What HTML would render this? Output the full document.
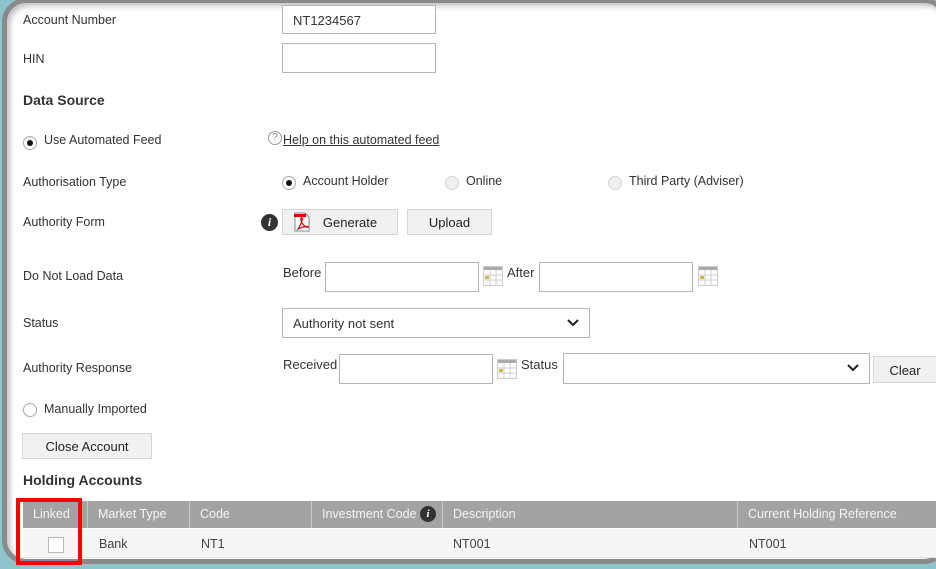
<!DOCTYPE html>
<html><head><style>
*{margin:0;padding:0;box-sizing:border-box}
html,body{width:936px;height:569px;overflow:hidden;background:#8fc4cc;font-family:"Liberation Sans",sans-serif;font-size:12.5px;color:#333}
#panel{position:absolute;left:2px;top:-2px;width:946px;height:566px;background:#fff;border:5px solid #8a8a8a;border-radius:24px;box-shadow:inset 3px 3px 6px rgba(0,0,0,.25)}
.a{position:absolute;white-space:nowrap}
.in{position:absolute;border:1px solid #b5b5b5;background:#fff}
.btn{position:absolute;border:1px solid #d6d6d6;background:#f1f1f1;text-align:center;font-size:13px;color:#222}
.h{font-weight:bold;font-size:14px;color:#333}
.r{position:absolute;width:14px;height:14px;border-radius:50%;border:1px solid #aaa;background:#fff}
.r.on::after{content:"";position:absolute;left:3px;top:3px;width:6px;height:6px;border-radius:50%;background:#111}
.r.dis{background:#f0f0f0;border-color:#d4d4d4}
.cal{position:absolute;width:20px;height:20px}
.sel svg{position:absolute;right:10px;top:10px}
.th{position:absolute;top:501px;height:27px;background:#a3a3a3;color:#f5f5f5;line-height:27px;padding-left:10px;border-right:1px solid #c8c8c8;font-size:12.5px}
.td{position:absolute;top:537px;color:#444}
</style></head><body>
<div id="panel"></div>
<div class="a" style="left:23px;top:13px">Account Number</div>
<div class="in" style="left:282px;top:5px;width:154px;height:29px;padding:7px 10px;font-size:13px">NT1234567</div>
<div class="a" style="left:23px;top:52px">HIN</div>
<div class="in" style="left:282px;top:43px;width:154px;height:30px"></div>
<div class="a h" style="left:23px;top:92px">Data Source</div>
<div class="r on" style="left:23px;top:136px"></div>
<div class="a" style="left:44px;top:133px">Use Automated Feed</div>
<div class="a" style="left:268px;top:131px;width:14px;height:14px;border:1px solid #999;border-radius:50%;font-size:10px;line-height:12px;text-align:center;color:#888">?</div>
<div class="a" style="left:283px;top:133px;text-decoration:underline;color:#333">Help on this automated feed</div>
<div class="a" style="left:23px;top:175px">Authorisation Type</div>
<div class="r on" style="left:282px;top:176px"></div>
<div class="a" style="left:303px;top:174px">Account Holder</div>
<div class="r dis" style="left:445px;top:176px"></div>
<div class="a" style="left:466px;top:174px">Online</div>
<div class="r dis" style="left:608px;top:176px"></div>
<div class="a" style="left:629px;top:174px">Third Party (Adviser)</div>
<div class="a" style="left:23px;top:215px">Authority Form</div>
<div class="a" style="left:261px;top:214px;width:17px;height:17px;border-radius:50%;background:#333;color:#fff;font:bold italic 12px 'Liberation Serif',serif;text-align:center;line-height:17px">i</div>
<div class="btn" style="left:282px;top:209px;width:116px;height:26px;line-height:26px;padding-left:20px">Generate</div>
<svg class="a" style="left:293px;top:212px" width="18" height="20" viewBox="0 0 18 20"><path d="M2 1h10l4 4v14H2z" fill="#fff" stroke="#888"/><rect x="1" y="2" width="12" height="3" fill="#d00"/><path d="M5 17c3-5 5-9 4-11s-2 2 0 5 5 5 6 4-4-1-10 2z" fill="none" stroke="#d00" stroke-width="1.2"/></svg>
<div class="btn" style="left:407px;top:209px;width:85px;height:26px;line-height:26px">Upload</div>
<div class="a" style="left:23px;top:269px">Do Not Load Data</div>
<div class="a" style="left:283px;top:265px;font-size:13px">Before</div>
<div class="in" style="left:325px;top:262px;width:154px;height:30px"></div>
<svg class="cal" style="left:483px;top:266px" viewBox="0 0 20 20"><rect x=".5" y=".5" width="19" height="19" fill="#fff" stroke="#ccc"/><rect x="1" y="1" width="18" height="3" fill="#aaa"/><path d="M1 9h18M1 14h18M7 4v15M13 4v15" stroke="#ccc"/><rect x="2" y="10" width="4" height="3" fill="#d4b640"/></svg>
<div class="a" style="left:507px;top:265px;font-size:13px">After</div>
<div class="in" style="left:539px;top:262px;width:154px;height:30px"></div>
<svg class="cal" style="left:698px;top:266px" viewBox="0 0 20 20"><rect x=".5" y=".5" width="19" height="19" fill="#fff" stroke="#ccc"/><rect x="1" y="1" width="18" height="3" fill="#aaa"/><path d="M1 9h18M1 14h18M7 4v15M13 4v15" stroke="#ccc"/><rect x="2" y="10" width="4" height="3" fill="#d4b640"/></svg>
<div class="a" style="left:23px;top:316px">Status</div>
<div class="in sel" style="left:282px;top:308px;width:308px;height:30px;padding:7px 10px;font-size:13px">Authority not sent<svg width="12" height="8" viewBox="0 0 12 8"><path d="M1 1l5 5 5-5" fill="none" stroke="#222" stroke-width="2"/></svg></div>
<div class="a" style="left:23px;top:361px">Authority Response</div>
<div class="a" style="left:283px;top:357px;font-size:13px">Received</div>
<div class="in" style="left:339px;top:354px;width:154px;height:30px"></div>
<svg class="cal" style="left:497px;top:359px" viewBox="0 0 20 20"><rect x=".5" y=".5" width="19" height="19" fill="#fff" stroke="#ccc"/><rect x="1" y="1" width="18" height="3" fill="#aaa"/><path d="M1 9h18M1 14h18M7 4v15M13 4v15" stroke="#ccc"/><rect x="2" y="10" width="4" height="3" fill="#d4b640"/></svg>
<div class="a" style="left:521px;top:357px;font-size:13px">Status</div>
<div class="in sel" style="left:563px;top:353px;width:307px;height:31px"><svg width="12" height="8" viewBox="0 0 12 8"><path d="M1 1l5 5 5-5" fill="none" stroke="#222" stroke-width="2"/></svg></div>
<div class="btn" style="left:873px;top:356px;width:70px;height:27px;line-height:27px;padding-right:6px">Clear</div>
<div class="r" style="left:23px;top:403px"></div>
<div class="a" style="left:44px;top:402px">Manually Imported</div>
<div class="btn" style="left:22px;top:433px;width:130px;height:26px;line-height:26px">Close Account</div>
<div class="a h" style="left:23px;top:472px">Holding Accounts</div>
<div class="th" style="left:23px;width:65px">Linked</div>
<div class="th" style="left:88px;width:102px">Market Type</div>
<div class="th" style="left:190px;width:122px">Code</div>
<div class="th" style="left:312px;width:131px">Investment Code <span style="display:inline-block;width:16px;height:16px;border-radius:50%;background:#333;color:#fff;font:bold italic 11px 'Liberation Serif',serif;text-align:center;line-height:16px;vertical-align:middle;margin-top:-2px">i</span></div>
<div class="th" style="left:443px;width:295px">Description</div>
<div class="th" style="left:738px;width:200px;border-right:0">Current Holding Reference</div>
<div style="position:absolute;left:23px;top:529px;width:913px;height:29px;background:#f5f5f5;border-bottom:1px solid #e2e2e2"></div>
<div class="a" style="left:48px;top:537px;width:16px;height:16px;border:1px solid #bbb;background:#fff"></div>
<div class="td" style="left:99px">Bank</div>
<div class="td" style="left:201px">NT1</div>
<div class="td" style="left:453px">NT001</div>
<div class="td" style="left:749px">NT001</div>
<div class="a" style="left:16px;top:498px;width:66px;height:67px;border:4px solid #f00"></div>
</body></html>
